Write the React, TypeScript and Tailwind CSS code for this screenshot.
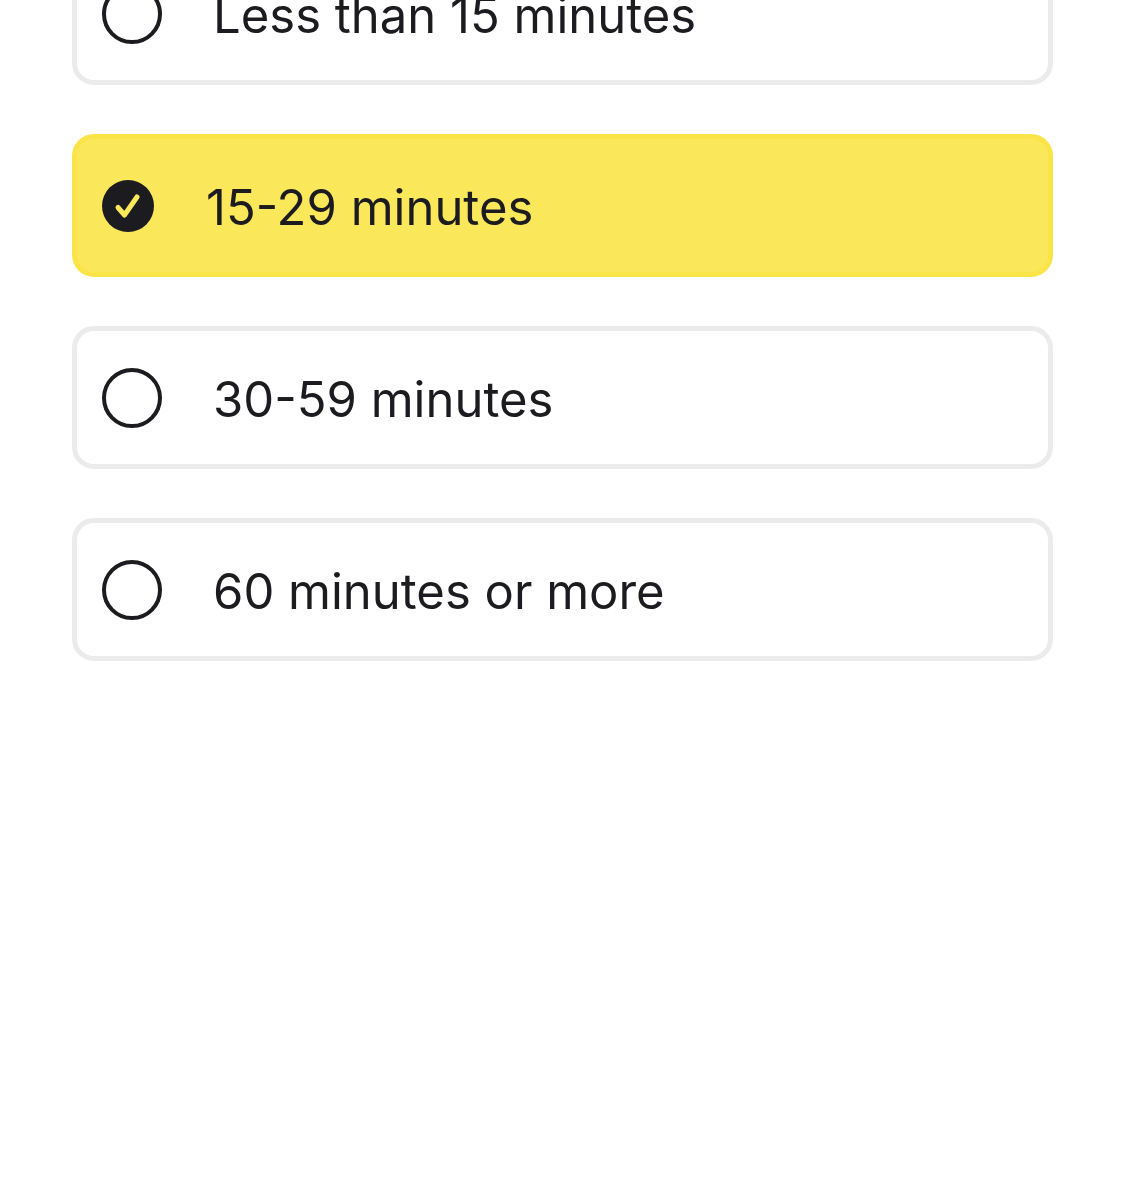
import React from 'react';

const options = [
  { label: 'Less than 15 minutes', selected: false },
  { label: '15-29 minutes', selected: true },
  { label: '30-59 minutes', selected: false },
  { label: '60 minutes or more', selected: false },
];

const CheckedDot = () => (
  <svg width="52" height="52" viewBox="0 0 52 52" className="shrink-0">
    <circle cx="26" cy="26" r="26" fill="#1c1b1f" />
    <path d="M16 27.5 L22.5 35 L35 17" fill="none" stroke="#fae85a" strokeWidth="5" strokeLinecap="round" strokeLinejoin="round" />
  </svg>
);

const EmptyDot = () => (
  <div className="w-[60px] h-[60px] shrink-0 rounded-full border-[4.5px] border-[#1c1b1f]" />
);

export default function App() {
  return (
    <div className="min-h-[1186px] bg-white overflow-hidden" style={{ fontFamily: 'Inter, "Noto Sans", sans-serif' }}>
      <div className="px-[72px] mt-[-58px] flex flex-col gap-[49px]">
        {options.map((o) => (
          <div
            key={o.label}
            className={`h-[143px] rounded-[22px] border-[5px] flex items-center pl-[25px] ${
              o.selected ? 'bg-[#fae85a] border-[#fbe448] gap-[52px]' : 'bg-white border-[#ebebeb] gap-[51px]'
            }`}
          >
            {o.selected ? <CheckedDot /> : <EmptyDot />}
            <span className="text-[49px] text-[#1c1b1f] leading-none pt-[3px]">{o.label}</span>
          </div>
        ))}
      </div>
    </div>
  );
}
